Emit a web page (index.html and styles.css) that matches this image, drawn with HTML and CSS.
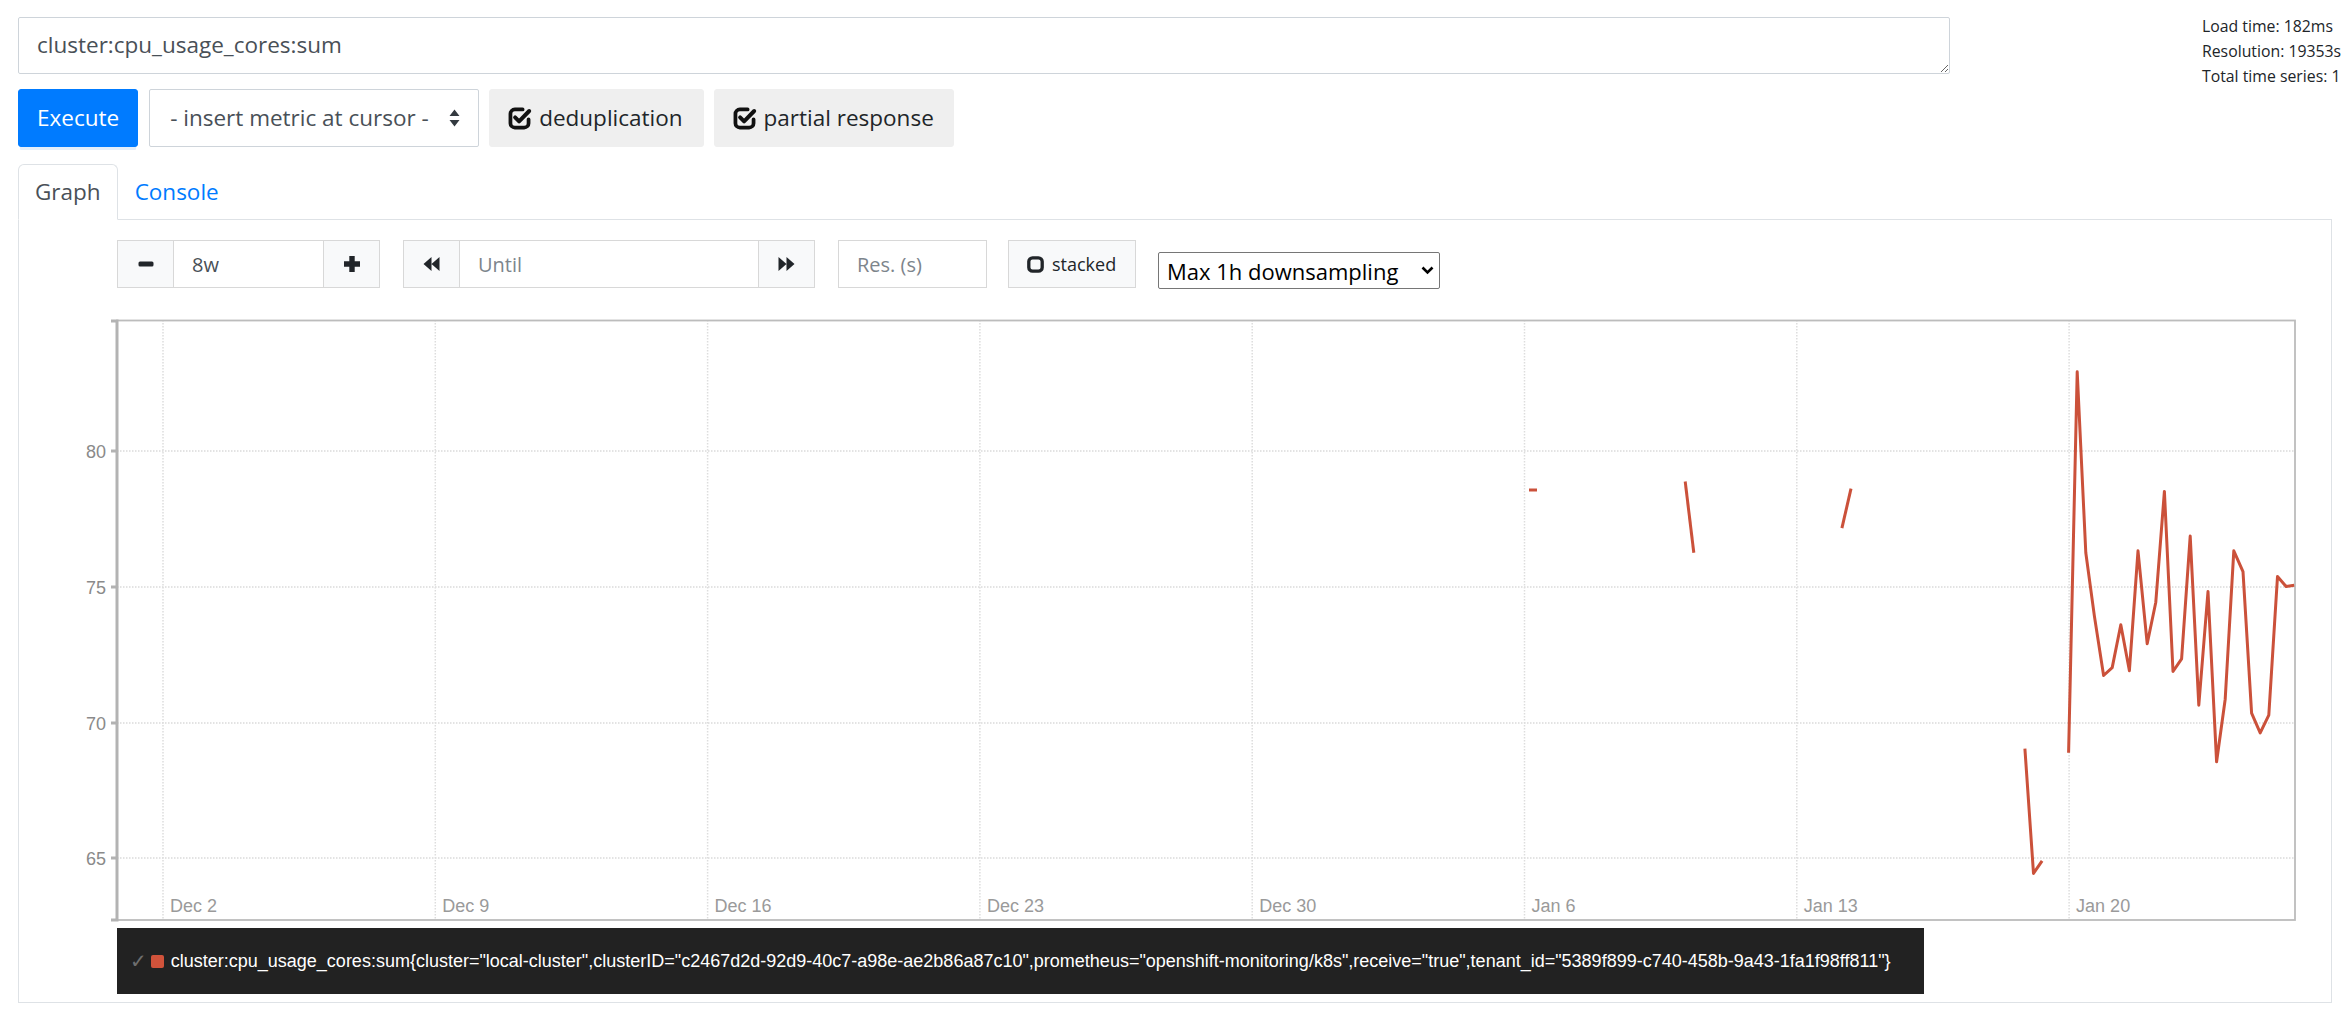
FILE: index.html
```html
<!DOCTYPE html>
<html>
<head>
<meta charset="utf-8">
<title>Thanos Query</title>
<link rel="stylesheet" href="styles.css">
</head>
<body>
<div class="page">
  <div class="query-row">
    <textarea class="expr" rows="1">cluster:cpu_usage_cores:sum</textarea>
    <div class="stats">Load time: 182ms<br>Resolution: 19353s<br>Total time series: 1</div>
  </div>

  <div class="action-row">
    <button class="btn btn-primary">Execute</button>
    <div class="metric-select">
      <span>- insert metric at cursor -</span>
      <svg class="updown" width="11" height="18" viewBox="0 0 11 18"><path d="M5.5 0.5L10.5 7H0.5Z M5.5 17.5L0.5 11H10.5Z" fill="#343a40"/></svg>
    </div>
    <button class="btn btn-light btn-dedup">
      <svg class="ico-check" width="25" height="25" viewBox="0 0 24 24"><path d="M15 3.3H7.5a4.2 4.2 0 0 0-4.2 4.2v9a4.2 4.2 0 0 0 4.2 4.2h9a4.2 4.2 0 0 0 4.2-4.2v-3.7" fill="none" stroke="#111" stroke-width="3.6" stroke-linecap="round"/><path d="M7.8 11l3.8 3.8L21.3 4.8" fill="none" stroke="#111" stroke-width="3.8" stroke-linecap="round" stroke-linejoin="round"/></svg>
      <span>deduplication</span>
    </button>
    <button class="btn btn-light btn-partial">
      <svg class="ico-check" width="25" height="25" viewBox="0 0 24 24"><path d="M15 3.3H7.5a4.2 4.2 0 0 0-4.2 4.2v9a4.2 4.2 0 0 0 4.2 4.2h9a4.2 4.2 0 0 0 4.2-4.2v-3.7" fill="none" stroke="#111" stroke-width="3.6" stroke-linecap="round"/><path d="M7.8 11l3.8 3.8L21.3 4.8" fill="none" stroke="#111" stroke-width="3.8" stroke-linecap="round" stroke-linejoin="round"/></svg>
      <span>partial response</span>
    </button>
  </div>

  <ul class="tabs">
    <li class="tab active">Graph</li>
    <li class="tab">Console</li>
  </ul>

  <div class="tab-content">
    <div class="graph-controls">
      <div class="input-group">
        <button class="ig-btn"><svg width="16" height="6" viewBox="0 0 16 6"><rect x="0.5" y="0.5" width="15" height="5" rx="1.5" fill="#212529"/></svg></button>
        <input class="ig-input range-input" value="8w">
        <button class="ig-btn"><svg width="18" height="18" viewBox="0 0 18 18"><path d="M6.3 1h5.4v5.3H17v5.4h-5.3V17H6.3v-5.3H1V6.3h5.3z" fill="#212529"/></svg></button>
      </div>
      <div class="input-group">
        <button class="ig-btn"><svg width="17" height="16" viewBox="0 0 17 16"><path d="M0.5 8L8.5 1V15Z M8.5 8L16.5 1V15Z" fill="#212529"/></svg></button>
        <input class="ig-input until-input" placeholder="Until">
        <button class="ig-btn"><svg width="17" height="16" viewBox="0 0 17 16"><path d="M16.5 8L8.5 1V15Z M8.5 8L0.5 1V15Z" fill="#212529"/></svg></button>
      </div>
      <input class="ig-input res-input" placeholder="Res. (s)">
      <button class="stacked-btn">
        <svg width="17" height="17" viewBox="0 0 17 17"><rect x="1.8" y="1.8" width="13.4" height="13.4" rx="3.8" fill="none" stroke="#212529" stroke-width="3.3"/></svg>
        <span>stacked</span>
      </button>
      <div class="ds-select">
        <span>Max 1h downsampling</span>
        <svg width="13" height="9" viewBox="0 0 13 9"><path d="M1.5 1.5L6.5 6.5L11.5 1.5" fill="none" stroke="#000" stroke-width="2.6"/></svg>
      </div>
    </div>

    <svg class="chart" width="2240" height="616" viewBox="60 312 2240 616">
      <g class="grid-y" stroke="#dadada" stroke-width="1.5" stroke-dasharray="1.5 1.5">
        <line x1="117" y1="451" x2="2295" y2="451"/>
        <line x1="117" y1="587" x2="2295" y2="587"/>
        <line x1="117" y1="723" x2="2295" y2="723"/>
        <line x1="117" y1="858" x2="2295" y2="858"/>
      </g>
      <g class="grid-x" stroke="#dddddd" stroke-width="1.5" stroke-dasharray="1.5 1.5">
        <line x1="163" y1="320" x2="163" y2="920"/>
        <line x1="435.3" y1="320" x2="435.3" y2="920"/>
        <line x1="707.6" y1="320" x2="707.6" y2="920"/>
        <line x1="979.9" y1="320" x2="979.9" y2="920"/>
        <line x1="1252.2" y1="320" x2="1252.2" y2="920"/>
        <line x1="1524.5" y1="320" x2="1524.5" y2="920"/>
        <line x1="1796.8" y1="320" x2="1796.8" y2="920"/>
        <line x1="2069.1" y1="320" x2="2069.1" y2="920"/>
      </g>
      <rect x="117" y="320.5" width="2178" height="599.5" fill="none" stroke="#bcbcbc" stroke-width="1.8"/>
      <path d="M111 321H117V920H111 M111 451H117 M111 587H117 M111 723H117 M111 858H117" fill="none" stroke="#b3b3b3" stroke-width="3"/>
      <g class="ylabels" font-family="Liberation Sans, Arial, sans-serif" font-size="18" fill="#8a8a8a" text-anchor="end">
        <text x="106" y="457.5">80</text>
        <text x="106" y="593.5">75</text>
        <text x="106" y="729.5">70</text>
        <text x="106" y="864.5">65</text>
      </g>
      <g class="xlabels" font-family="Liberation Sans, Arial, sans-serif" font-size="18" fill="#9a9a9a">
        <text x="170" y="912">Dec 2</text>
        <text x="442.3" y="912">Dec 9</text>
        <text x="714.6" y="912">Dec 16</text>
        <text x="986.9" y="912">Dec 23</text>
        <text x="1259.2" y="912">Dec 30</text>
        <text x="1531.5" y="912">Jan 6</text>
        <text x="1803.8" y="912">Jan 13</text>
        <text x="2076.1" y="912">Jan 20</text>
      </g>
      <g class="series" fill="none" stroke="#cb513a" stroke-width="3" stroke-linejoin="round">
        <polyline points="1529,490 1537,490"/>
        <polyline points="1685.2,481.5 1693.8,552.7"/>
        <polyline points="1841.9,528.2 1851,488.6"/>
        <polyline points="2024.9,748.7 2033.5,873.4 2042.1,860.8"/>
        <polyline points="2068.6,752.7 2077.2,371.8 2085.8,552.7 2094.4,616.1 2103.6,675.5 2112.2,667.6 2120.8,624.8 2129.4,670.7 2138,550.8 2147.2,643.8 2155.8,602.2 2164.4,491.4 2173,671.5 2181.6,658.8 2190.2,536.1 2198.8,705.2 2208,591.5 2216.6,761.8 2225.2,699.2 2233.8,550.8 2243,571.7 2251.6,713.1 2260.2,732.9 2268.8,715.1 2277.5,576.5 2286.1,586.4 2294.2,585.2"/>
      </g>
    </svg>

    <div class="legend">
      <span class="legend-check">✓</span>
      <span class="swatch"></span>
      <span class="legend-label">cluster:cpu_usage_cores:sum{cluster="local-cluster",clusterID="c2467d2d-92d9-40c7-a98e-ae2b86a87c10",prometheus="openshift-monitoring/k8s",receive="true",tenant_id="5389f899-c740-458b-9a43-1fa1f98ff811"}</span>
    </div>
  </div>
</div>
</body>
</html>
```

FILE: styles.css
```css
* {
  box-sizing: border-box;
}

body {
  margin: 0;
  background: #fff;
  color: #212529;
  font-family: "Open Sans", "Noto Sans", sans-serif;
  font-size: 22.5px;
  line-height: 36px;
}

.page {
  padding: 14px 17px 0 18px;
}

/* query row */
.query-row {
  display: flex;
  align-items: flex-start;
  height: 60px;
}

.expr {
  display: block;
  flex-shrink: 0;
  width: 1932px;
  height: 57px;
  margin: 3px 0 0 0;
  padding: 9px 18px;
  border: 1px solid #ced4da;
  border-radius: 2px;
  font-family: "Open Sans", "Noto Sans", sans-serif;
  font-size: 22.5px;
  line-height: 36px;
  color: #495057;
  overflow: hidden;
  resize: vertical;
  outline: none;
}

.stats {
  flex-shrink: 0;
  margin-left: 252px;
  font-size: 15.8px;
  line-height: 25px;
  white-space: nowrap;
  color: #212529;
}

/* action row */
.action-row {
  display: flex;
  gap: 10px;
  margin-top: 15px;
  height: 58px;
}

.btn {
  display: flex;
  align-items: center;
  height: 58px;
  padding: 0 18px;
  border: 1px solid transparent;
  border-radius: 3px;
  font-family: inherit;
  font-size: 22.5px;
  line-height: 36px;
  cursor: pointer;
}

.btn-primary {
  background: #007bff;
  border-color: #007bff;
  color: #fff;
  margin-right: 1px;
  box-shadow: 0 5px 0 -2px #e3eefb;
}

.btn-light {
  background: #efefef;
  border-color: #efefef;
  color: #212529;
  gap: 7px;
}

.btn-dedup {
  padding: 0 20px 0 17px;
}

.btn-partial {
  padding: 0 19px 0 17px;
}

.metric-select {
  display: flex;
  align-items: center;
  justify-content: space-between;
  width: 330px;
  height: 58px;
  padding: 0 18px 0 20px;
  border: 1px solid #ced4da;
  border-radius: 2px;
  color: #495057;
  background: #fff;
}

/* tabs */
.tabs {
  display: flex;
  list-style: none;
  margin: 17px 0 0 0;
  padding: 0;
  border-bottom: 1px solid #dee2e6;
}

.tab {
  height: 56px;
  line-height: 53px;
  padding: 0 16px;
  margin-bottom: -1px;
  border: 1px solid transparent;
  border-top-left-radius: 6px;
  border-top-right-radius: 6px;
  color: #007bff;
}

.tab.active {
  color: #495057;
  background: #fff;
  border-color: #dee2e6 #dee2e6 #fff;
}

.tab-content {
  border: 1px solid #dee2e6;
  border-top: 0;
  padding: 20px 0 8px 41px;
}

/* graph controls */
.graph-controls {
  display: flex;
  align-items: flex-start;
  margin-left: 57px;
  height: 48px;
}

.input-group {
  display: flex;
  height: 48px;
  margin-right: 23px;
}

.ig-btn {
  display: flex;
  align-items: center;
  justify-content: center;
  width: 57px;
  height: 48px;
  padding: 0;
  background: #f8f9fa;
  border: 1px solid #d8d8d8;
  cursor: pointer;
}

.ig-input {
  height: 48px;
  padding: 0 18px;
  border: 1px solid #d8d8d8;
  border-left: 0;
  border-right: 0;
  font-family: "Open Sans", "Noto Sans", sans-serif;
  font-size: 20px;
  color: #495057;
  background: #fff;
  outline: none;
}

.ig-input::placeholder {
  color: #7d858c;
}

.range-input {
  width: 149px;
}

.until-input {
  width: 298px;
}

.res-input {
  width: 149px;
  border: 1px solid #d8d8d8;
  margin-right: 21px;
}

.stacked-btn {
  display: flex;
  align-items: center;
  gap: 8px;
  width: 128px;
  height: 48px;
  padding: 0 0 0 18px;
  background: #f8f9fa;
  border: 1px solid #d8d8d8;
  font-family: "Open Sans", "Noto Sans", sans-serif;
  font-size: 18px;
  color: #212529;
  margin-right: 22px;
  cursor: pointer;
}

.ds-select {
  display: flex;
  align-items: center;
  justify-content: space-between;
  width: 282px;
  height: 37px;
  margin-top: 12px;
  padding: 0 5px 0 8px;
  border: 1px solid #767676;
  border-radius: 2px;
  font-size: 22px;
  color: #000;
  background: #fff;
}

/* chart */
.chart {
  display: block;
  margin-top: 24px;
}

/* legend */
.legend {
  display: inline-flex;
  align-items: center;
  height: 66px;
  margin-left: 57px;
  padding: 0 33px 0 13px;
  background: #222;
  color: #fff;
  font-family: "Liberation Sans", Arial, sans-serif;
  font-size: 18px;
  white-space: nowrap;
}

.legend-check {
  font-family: "DejaVu Sans", sans-serif;
  font-size: 20px;
  color: #6e6e6e;
  margin-right: 4px;
}

.swatch {
  width: 13px;
  height: 13px;
  border-radius: 2px;
  background: #d1533b;
  margin-right: 7px;
}
```
